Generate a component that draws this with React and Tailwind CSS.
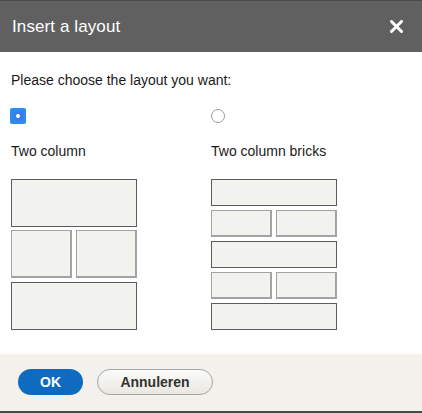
import React from 'react';

const Box = ({ h, light }) => (
  <div
    className={`bg-[#f2f2ee] border ${light ? 'border-[#a3a3a3] border-r-2 border-b-2' : 'border-[#5c5c5c] border-b-[1.5px]'}`}
    style={{ height: h }}
  />
);

const TwoColumn = () => (
  <div className="flex flex-col w-[126px]">
    <Box h={48} />
    <div className="grid grid-cols-2 gap-[4px] mt-[3px]">
      <Box h={48} light />
      <Box h={48} light />
    </div>
    <div className="mt-[4px]">
      <Box h={48} />
    </div>
  </div>
);

const Bricks = () => (
  <div className="flex flex-col gap-[4px] w-[126px]">
    <Box h={27} />
    <div className="grid grid-cols-2 gap-[4px]">
      <Box h={27} light />
      <Box h={27} light />
    </div>
    <Box h={27} />
    <div className="grid grid-cols-2 gap-[4px]">
      <Box h={27} light />
      <Box h={27} light />
    </div>
    <Box h={27} />
  </div>
);

export default function App() {
  return (
    <div
      className="w-[422px] h-[413px] flex flex-col bg-white text-[#1a1a1a]"
      style={{ fontFamily: '"Liberation Sans", Arial, sans-serif' }}
    >
      {/* Header */}
      <div className="h-[52px] bg-[#606060] border-t border-[#4a4a4a] flex items-center justify-between pl-[12px] pr-[19px] shrink-0">
        <h1 className="text-white text-[17px] font-medium tracking-[0.1px]">Insert a layout</h1>
        <svg width="13" height="13" viewBox="0 0 13 13">
          <path d="M1.5 1.5 L11.5 11.5 M11.5 1.5 L1.5 11.5" stroke="white" strokeWidth="3" strokeLinecap="round" />
        </svg>
      </div>

      {/* Body */}
      <div className="flex-1 px-[11px] pt-[20px]">
        <p className="text-[14px] leading-[17px]">Please choose the layout you want:</p>
        <div className="flex mt-[19px]">
          <div className="w-[200px]">
            <div className="w-[16px] h-[16px] ml-[-1px] rounded-[2px] bg-[#2d8cf0] flex items-center justify-center">
              <div className="w-[11px] h-[11px] rounded-full bg-[#3b7de8] flex items-center justify-center">
                <div className="w-[4px] h-[4px] rounded-full bg-white" />
              </div>
            </div>
            <p className="text-[14px] mt-[19px] leading-[17px]">Two column</p>
            <div className="mt-[19px]">
              <TwoColumn />
            </div>
          </div>
          <div>
            <div className="w-[14px] h-[14px] mt-[1px] rounded-full border border-[#9b9b9b] bg-white" />
            <p className="text-[14px] mt-[20px] leading-[17px]">Two column bricks</p>
            <div className="mt-[19px]">
              <Bricks />
            </div>
          </div>
        </div>
      </div>

      {/* Footer */}
      <div className="h-[59px] bg-[#f2f1eb] border-b-2 border-[#4a4a4a] flex items-start pt-[15px] pl-[18px] gap-[14px] shrink-0">
        <button className="w-[65px] h-[26px] rounded-full bg-[#0f6bbf] text-white text-[14px] font-bold">OK</button>
        <button className="w-[116px] h-[26px] rounded-full bg-gradient-to-b from-[#fbfbf9] to-[#e8e7e1] border border-[#a6a6a6] text-[#333] text-[14px] font-bold">
          Annuleren
        </button>
      </div>
    </div>
  );
}
